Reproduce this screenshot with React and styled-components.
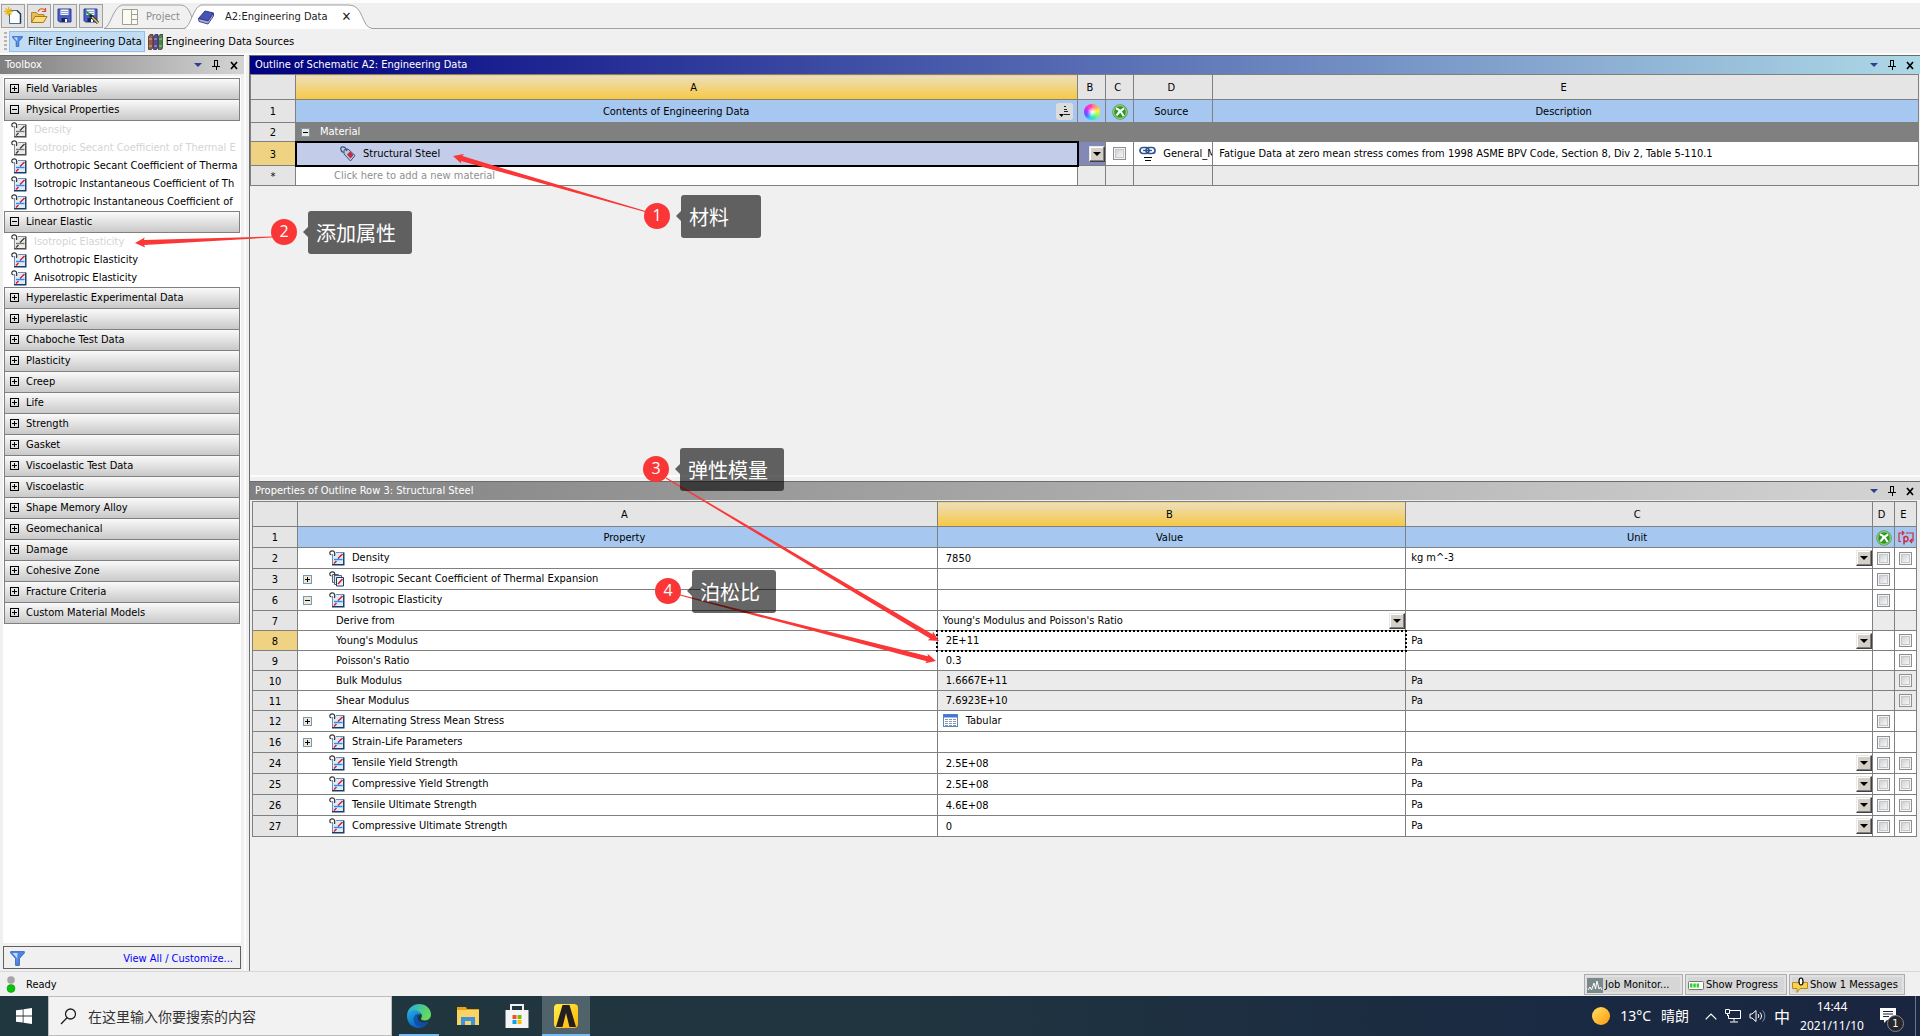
import React from 'react';
import styled, { createGlobalStyle, css } from 'styled-components';

const GlobalStyle = createGlobalStyle`
  *, *::before, *::after { box-sizing: border-box; }
  body { margin: 0; background: #f0f0f0; overflow: hidden; }
  body, button, input, select, table {
    font-family: 'DejaVu Sans Condensed', 'DejaVu Sans', 'Noto Sans CJK SC', sans-serif;
    font-size: 11px;
    line-height: 14px;
    color: #000;
  }
  button { margin: 0; padding: 0; border: 0; background: none; white-space: nowrap; }
  svg { display: block; flex: none; }
`;

/* ---------- layout ---------- */
const Page = styled.div`
  position: relative;
  display: flex;
  flex-direction: column;
  height: 100vh;
  overflow: hidden;
`;
const TabStrip = styled.header`
  display: flex;
  height: 29px;
  border-top: 3px solid #fdfdfd;
  background: #f0f0f0;
`;
const ToolGroup = styled.div`
  display: flex;
  gap: 2px;
  padding: 1px 0 1px 1px;
`;
const ToolButton = styled.button`
  display: grid;
  place-items: center;
  width: 24px;
  height: 24px;
  border: 1px solid #a0a0a0;
  background: #e3e3e3;
`;
const Tabs = styled.nav`
  display: flex;
  flex: 1;
  padding-left: 1px;
`;
const TabButton = styled.button`
  position: relative;
  display: flex;
  align-items: center;
  height: 26px;
  padding-top: 2px;
  gap: ${p => (p.$active ? 11 : 8)}px;
  width: ${p => (p.$active ? 188 : 80)}px;
  padding-left: ${p => (p.$active ? 14 : 18)}px;
  color: ${p => (p.$active ? '#222' : '#8c8c8c')};
  > svg { position: relative; }
  > span { position: relative; }
`;
const TabShape = styled.svg`
  && { position: absolute; left: 0; top: 0; overflow: visible; }
`;
const TabRest = styled.div`
  flex: 1;
  height: 26px;
  border-bottom: 1px solid #a0a0a0;
`;
const CloseMark = styled.span`
  margin-left: 3px;
  font-weight: bold;
  font-size: 13px;
`;
const FilterBar = styled.div`
  display: flex;
  align-items: center;
  height: 26px;
  padding: 1px 0 0 4px;
  border-bottom: 2px solid #fbfbfb;
`;
const Grip = styled.i`
  width: 3px;
  height: 19px;
  margin-right: 2px;
  background: repeating-linear-gradient(#b4b4b4 0 2px, transparent 2px 4px);
`;
const BarButton = styled.button`
  display: flex;
  align-items: center;
  gap: ${p => (p.$on ? 5 : 3)}px;
  height: 21px;
  padding: 0 2px;
  border: 1px solid ${p => (p.$on ? '#90c0f0' : 'transparent')};
  background: ${p => (p.$on ? '#c1dcf3' : 'transparent')};
`;
const Work = styled.div`
  display: flex;
  flex: 1;
  min-height: 0;
`;
const Sidebar = styled.aside`
  display: flex;
  flex-direction: column;
  width: 244px;
`;
const Splitter = styled.div`
  width: 6px;
  border-left: 2px solid #fcfcfc;
  border-right: 1px solid #707070;
`;
const Main = styled.main`
  display: flex;
  flex-direction: column;
  flex: 1;
  min-width: 0;
`;
const TitleBar = styled.div`
  display: flex;
  align-items: center;
  gap: 10px;
  height: 19px;
  padding: 0 6px 0 5px;
  border-top: 1px solid #6c6c6c;
  color: #fff;
  background: ${p => (p.$focused ? 'linear-gradient(90deg, #000080, #add8e6)' : 'linear-gradient(90deg, #808080, #d4d4d4)')};
  h2 { flex: 1; margin: 0; font: inherit; }
`;
const TitleButton = styled.button`
  display: grid;
  place-items: center;
  height: 14px;
`;

/* ---------- toolbox ---------- */
const TreeArea = styled.div`
  flex: 1;
  min-height: 0;
  margin: 2px 3px 3px 3px;
  padding: 2px 1px 0 1px;
  background: #fff;
  overflow: hidden;
`;
const Category = styled.button`
  display: flex;
  align-items: center;
  gap: 7px;
  width: 100%;
  height: 22px;
  margin-bottom: -1px;
  padding: 0 0 1px 5px;
  border: 1px solid #808080;
  background: linear-gradient(#fafafa, #c9c9c9);
  position: relative;
`;
const ItemList = styled.ul`
  margin: 0;
  padding: 1px 0 0 7px;
  list-style: none;
`;
const Item = styled.li`
  display: flex;
  align-items: center;
  gap: 7px;
  height: 18px;
  white-space: nowrap;
  color: ${p => (p.$off ? '#d4d4d4' : '#000')};
`;
const CustomizeBar = styled.div`
  display: flex;
  align-items: center;
  justify-content: space-between;
  height: 23px;
  margin: 0 3px 2px 3px;
  padding: 2px 7px 0 6px;
  border: 1px solid #606060;
  a { color: #0000ff; text-decoration: none; }
`;

/* ---------- grids ---------- */
const OutlinePane = styled.section`
  height: 422px;
  border-bottom: 2px solid #fcfcfc;
`;
const PropertiesPane = styled.section`
  flex: 1;
  min-height: 0;
  margin-top: 4px;
`;
const TableInset = styled.div`
  padding: ${p => (p.$wide ? '0 1px 0 0' : '1px 3px 0 2px')};
`;
const Grid = styled.table`
  width: 100%;
  table-layout: fixed;
  border-collapse: collapse;
  background: #fff;
`;
const Col = styled.col`
  width: ${p => p.$w || 'auto'};
`;
const Row = styled.tr`
  height: ${p => p.$h || 21}px;
`;
const cell = css`
  padding: 0;
  border: 1px solid #808080;
  font-weight: normal;
  white-space: nowrap;
  overflow: hidden;
`;
const Letter = styled.th`
  ${cell}
  padding: 2px ${p => (p.$main ? 0 : 4)}px 0 ${p => (p.$main ? 14 : 0)}px;
  background: ${p => (p.$hot ? 'linear-gradient(#ecdfbd, #f7c843)' : '#e5e5e5')};
`;
const Head = styled.th`
  ${cell}
  padding: 1px ${p => (p.$main || p.$icon ? 0 : 4)}px 0 ${p => (p.$main ? 14 : 0)}px;
  background: #a6c7f0;
`;
const HeadInner = styled.span`
  display: flex;
  align-items: center;
  justify-content: center;
`;
const HeadText = styled.span`
  flex: 1;
`;
const SortButton = styled.button`
  display: grid;
  place-items: center;
  width: 17px;
  height: 17px;
  margin-right: 4px;
  border-radius: 3px;
  background: #dcdcdc;
`;
const Num = styled.th`
  ${cell}
  padding-top: 2px;
  background: ${p => (p.$hot ? '#f0d283' : '#e5e5e5')};
`;
const Cell = styled.td`
  ${cell}
  padding-left: ${p => p.$pad || 0}px;
  background: ${p => p.$bg || '#fff'};
  color: ${p => p.$fg || '#000'};
  ${p => p.$selected && css`
    outline: 2px solid #000;
    outline-offset: -1px;
    position: relative;
  `}
  ${p => p.$marching && css`
    outline: 2px dotted #000;
    outline-offset: -1px;
    position: relative;
  `}
`;
const Label = styled.span`
  display: flex;
  align-items: center;
  gap: ${p => p.$gap || 7}px;
  padding-left: ${p => p.$indent || 0}px;
`;
const Slot = styled.span`
  display: flex;
  width: 19px;
`;
const Center = styled.span`
  display: flex;
  justify-content: ${p => (p.$end ? 'flex-end' : 'center')};
`;
const ValueBox = styled.input`
  display: block;
  width: 100%;
  height: 16px;
  padding: 0 0 0 8px;
  border: 0;
  background: transparent;
  outline: none;
`;
const PickWrap = styled.span`
  display: flex;
  align-items: center;
  position: relative;
`;
const Pick = styled.select`
  appearance: none;
  flex: 1;
  min-width: 0;
  height: 16px;
  padding: 0 18px 0 5px;
  border: 0;
  background: transparent;
  outline: none;
`;
const dropFace = css`
  display: grid;
  place-items: center;
  width: 16px;
  height: 16px;
  border: 1px solid;
  border-color: #e8e8e8 #404040 #404040 #e8e8e8;
  background: #d4d0c8;
  box-shadow: inset -1px -1px 0 #808080, inset 1px 1px 0 #fff;
`;
const DropFace = styled.i`
  ${dropFace}
  position: absolute;
  right: 0;
  pointer-events: none;
`;
const DropButton = styled.button`
  ${dropFace}
`;
const Tick = styled.input`
  appearance: none;
  display: block;
  width: 13px;
  height: 13px;
  margin: 0 auto;
  border: 1px solid #8f8f8f;
  background: linear-gradient(135deg, #c3c8ce, #f5f5f5 80%);
  box-shadow: inset 0 0 0 1px #f4f4f4, inset 0 0 0 2px #c4c8cc;
`;

/* ---------- status bar and taskbar ---------- */
const StatusBar = styled.footer`
  display: flex;
  align-items: center;
  height: 25px;
  padding: 1px 15px 0 6px;
  border-top: 1px solid #d7d7d7;
  background: #f0f0f0;
`;
const StatusText = styled.span`
  flex: 1;
  padding-left: 10px;
`;
const StatusButtons = styled.div`
  display: flex;
  gap: 2px;
`;
const StatusButton = styled.button`
  display: flex;
  align-items: center;
  gap: 2px;
  width: ${p => p.$w}px;
  height: 21px;
  padding: 1px 2px 0;
  border: 1px solid #adadad;
  background: #d6d6d6;
  box-shadow: inset 0 0 0 2px #e1e1e1;
`;
const Taskbar = styled.footer`
  display: flex;
  height: 40px;
  background: linear-gradient(90deg, #21373f, #20353f 45%, #1a2a42 80%, #1a2540);
  font-family: 'Noto Sans', 'Noto Sans CJK SC', sans-serif;
  color: #fff;
`;
const StartButton = styled.button`
  display: grid;
  place-items: center;
  width: 48px;
`;
const SearchBox = styled.label`
  display: flex;
  align-items: center;
  gap: 11px;
  width: 344px;
  margin-right: 3px;
  padding-left: 11px;
  border: 1px solid #bdbdbd;
  background: #f2f2f2;
  input {
    flex: 1;
    min-width: 0;
    border: 0;
    padding: 0;
    outline: none;
    background: transparent;
    font: 14px/20px 'Noto Sans CJK SC', sans-serif;
  }
  input::placeholder { color: #333; opacity: 1; }
`;
const Apps = styled.div`
  display: flex;
  flex: 1;
  gap: 1px;
`;
const AppButton = styled.button`
  display: grid;
  place-items: center;
  width: 48px;
  background: ${p => (p.$current ? '#50626a' : 'transparent')};
  box-shadow: ${p => (p.$current ? 'inset 0 -2px #76b9ed' : 'none')};
  ${p => p.$running && css`
    background: linear-gradient(#76b9ed, #76b9ed) center bottom / 40px 2px no-repeat;
  `}
`;
const Tray = styled.div`
  display: flex;
  align-items: center;
  gap: 8px;
  padding-right: 4px;
`;
const Weather = styled.button`
  display: flex;
  align-items: center;
  gap: 10px;
  margin-right: 8px;
  color: #fff;
  font: 14px/20px 'Noto Sans', 'Noto Sans CJK SC', sans-serif;
`;
const Lang = styled.span`
  font: 16px/20px 'Noto Sans CJK SC', sans-serif;
`;
const Clock = styled.time`
  width: 68px;
  font-size: 12px;
  line-height: 19px;
  text-align: center;
`;
const Notice = styled.button`
  display: flex;
  position: relative;
  width: 42px;
  height: 40px;
  align-items: center;
  padding-left: 6px;
  border-right: 1px solid #6c7686;
`;
const NoticeCount = styled.span`
  position: absolute;
  left: 13px;
  top: 19px;
  display: grid;
  place-items: center;
  width: 17px;
  height: 17px;
  border: 1px solid #888;
  border-radius: 50%;
  background: #26282c;
  color: #fff;
`;

/* ---------- annotations drawn over the window ---------- */
const Arrows = styled.svg`
  position: absolute;
  inset: 0;
  width: 100%;
  height: 100%;
  pointer-events: none;
`;
const Badge = styled.span`
  position: absolute;
  left: ${p => p.$x}px;
  top: ${p => p.$y}px;
  display: grid;
  place-items: center;
  width: 26px;
  height: 26px;
  padding-bottom: 2px;
  border-radius: 50%;
  background: #fa3636;
  color: #fff;
  font: 16px/20px 'Open Sans', 'Noto Sans', sans-serif;
`;
const Callout = styled.span`
  position: absolute;
  left: ${p => p.$x}px;
  top: ${p => p.$y}px;
  width: ${p => p.$w}px;
  height: 43px;
  padding: 7px 8px;
  border-radius: 3px;
  background: rgba(0, 0, 0, 0.6);
  color: #fff;
  font: 20px/30px 'Noto Sans CJK SC', sans-serif;
  white-space: nowrap;
  &::before {
    content: '';
    position: absolute;
    right: 100%;
    top: 16px;
    border: 5px solid transparent;
    border-left: 0;
    border-right-color: rgba(0, 0, 0, 0.6);
  }
`;

/* ---------- icons ---------- */
const PlusMinus = ({ open, soft }) => (
  <svg width="9" height="9" viewBox="0 0 9 9" shapeRendering="crispEdges">
    <rect x="0.5" y="0.5" width="8" height="8" fill={soft ? '#ece9d8' : 'none'} stroke={soft ? '#7898b5' : '#000'} />
    <path d={open ? 'M2 4.5h5' : 'M2 4.5h5M4.5 2v5'} stroke="#000" />
  </svg>
);
const PropIcon = ({ off }) => (
  <svg width="16" height="16" viewBox="0 0 16 16">
    <path d="M3.500 4V14.500H14.500V2.500H7" fill={off ? '#ececec' : '#dfeaf6'} stroke={off ? '#8a8a8a' : '#6f8cb0'} />
    <path d="M3 14.800H14.800V2.500" fill="none" stroke={off ? '#4d4d4d' : '#1d3c62'} strokeWidth="1.400" />
    <path d="M5 9.500h8.500" stroke={off ? '#777' : '#2090ff'} strokeWidth="1.400" />
    <path d="M5 13.500L7.500 11M9 8.500L13.500 4" fill="none" stroke={off ? '#444' : '#d82020'} strokeWidth="1.500" />
    <path d="M2.500 5C0 4.500 .2 1 3 .8S6 3 5.500 6" fill="none" stroke="#333" strokeWidth="1.200" />
  </svg>
);
const StackIcon = () => (
  <svg width="16" height="16" viewBox="0 0 16 16">
    <path d="M3.500 3.500h6v8h-6z" fill="#dfe6ee" stroke="#50647c" />
    <path d="M5.500 4.500h7v9h-7z" fill="#dfe6ee" stroke="#50647c" />
    <path d="M7.500 6.500h7v8.500h-7z" fill="#eef4fa" stroke="#1d3c62" />
    <path d="M9 13l4.500-5" stroke="#d01818" strokeWidth="1.500" />
    <path d="M2.500 5C0 4.500 .2 1 3 .8S6 2.500 5.500 4.500" fill="none" stroke="#333" strokeWidth="1.200" />
  </svg>
);
const TagIcon = () => (
  <svg width="16" height="16" viewBox="0 0 16 16">
    <path d="M4 4l4-1 7 6.500-4.500 5.500L4 8z" fill="#bcc8da" stroke="#35507a" />
    <path d="M7 8.500l3-3 3.500 3.500-3 3.500z" fill="#c02a4a" />
    <path d="M3.500 6.500C0 5 0 1 2.500 .8S6 2 7 5" fill="none" stroke="#35507a" strokeWidth="1.200" />
  </svg>
);
const LinkIcon = () => (
  <svg width="17" height="16" viewBox="0 0 17 16">
    <rect x="1" y="1.500" width="9" height="6" rx="3" fill="none" stroke="#2f5590" strokeWidth="1.700" />
    <rect x="7" y="1.500" width="9" height="6" rx="3" fill="none" stroke="#2f5590" strokeWidth="1.700" />
    <path d="M4 4.500h9" stroke="#2f5590" strokeWidth="1.300" />
    <path d="M5 11.500h8M6 14.500h6" stroke="#000" />
  </svg>
);
const TabularIcon = () => (
  <svg width="16" height="14" viewBox="0 0 16 14">
    <rect x="0.500" y="0.500" width="14" height="12" fill="#fff" stroke="#5f86c4" />
    <rect x="0.500" y="0.500" width="14" height="3" fill="#3f78d8" />
    <path d="M2 5.500h3m1 0h3m1 0h3M2 7.500h3m1 0h3m1 0h3M2 9.500h3m1 0h3m1 0h3M2 11.500h3m1 0h3m1 0h3" stroke="#8496b4" />
  </svg>
);
const ExcludeIcon = () => (
  <svg width="16" height="16" viewBox="0 0 16 16">
    <circle cx="8" cy="8" r="7.300" fill="#2a9a1c" stroke="#6ba06a" />
    <circle cx="8" cy="8" r="6.300" fill="none" stroke="#cfe8c8" strokeWidth=".8" />
    <path d="M4 4.500C7 5 9.500 8 11.500 12M12 4.500C9 6 6 9 4.500 11.500" fill="none" stroke="#fff" strokeWidth="2" />
  </svg>
);
const ParamIcon = () => (
  <svg width="16" height="16" viewBox="0 0 16 16" fill="none" stroke="#d02a3c" strokeWidth="1.200">
    <path d="M3 11.500H1V3h4M4 1l2 2-2 2M8 3h7v8h-3M14 9l-2 2 2 2" />
    <path d="M6 14.500V6.500M6 7.500c1-1.500 4-1.500 4 1.500s-3 3-4 1.500" strokeWidth="1.500" />
  </svg>
);
const Wheel = styled.i`
  display: block;
  width: 16px;
  height: 16px;
  border-radius: 50%;
  background: radial-gradient(#fff, transparent 45%), conic-gradient(#f6c, #fa4, #fe4, #8f5, #3ea, #3cf, #56f, #a3f, #f3c, #f48);
`;
const Funnel = ({ size = 11 }) => (
  <svg width={size} height={size} viewBox="0 0 12 12">
    <path d="M0.500 0.500h11v1L7.500 6v5.500H4.500V6L.5 1.500z" fill="#4f86e4" stroke="#2a5cb8" strokeWidth=".7" />
    <path d="M2 1.500h4L5.500 10V5.500z" fill="#c4dcfa" />
  </svg>
);
const DownTri = ({ color = '#000' }) => (
  <svg width="8" height="4" viewBox="0 0 8 4"><path d="M0 0h8L4 4z" fill={color} /></svg>
);
const PinIcon = () => (
  <svg width="8" height="10" viewBox="0 0 8 10" fill="none" stroke="#000" shapeRendering="crispEdges">
    <path d="M2.500 6V.5h3V6M0 6.500h8M4 7v3M5 1v5" />
  </svg>
);
const XIcon = () => (
  <svg width="8" height="9" viewBox="0 0 8 9"><path d="M1 1l6 7M7 1L1 8" stroke="#000" strokeWidth="1.700" /></svg>
);
const SortIcon = () => (
  <svg width="12" height="12" viewBox="0 0 12 12" stroke="#222" fill="none">
    <path d="M5 .5h2M5 3.500h3M5 5.500h4M5 8.500h6" />
    <path d="M0 8h5L2.500 11z" fill="#000" stroke="none" />
  </svg>
);
const NewIcon = () => (
  <svg width="18" height="18" viewBox="0 0 18 18">
    <path d="M5.500 3.500h8l3 3v10h-11z" fill="#fdfefe" stroke="#4d6d92" />
    <path d="M13 3.500l3.500 3.500v9.500" fill="none" stroke="#1c3a5c" strokeWidth="1.500" />
    <path d="M4.500 0v9M0 4.500h9M1.500 1.500l6 6M7.500 1.500l-6 6" stroke="#e5b91c" strokeWidth="1.300" />
  </svg>
);
const OpenIcon = () => (
  <svg width="18" height="18" viewBox="0 0 18 18">
    <path d="M1.500 15.500V5.500h5l1.500 2h6v3" fill="#e9bc5a" stroke="#b8862a" />
    <path d="M1.500 15.500L5 9.500h12l-3.500 6z" fill="#fbdc7a" stroke="#a8781c" />
    <path d="M8 4.500c2-4 6-3 7-1M15.500 1v3.500h-3.500" fill="none" stroke="#d8502a" strokeWidth="1.200" />
  </svg>
);
const SaveIcon = ({ pencil }) => (
  <svg width="18" height="18" viewBox="0 0 18 18">
    <path d="M2 2h13v13H3.500L2 13.500z" fill="#4a5fc4" stroke="#2c3c94" />
    <path d="M4.500 2.500h8v5.500h-8z" fill="#f3f6ff" />
    <path d="M5 4.500h7M5 6.500h7" stroke="#9ab" />
    <path d="M5.500 11h6v4h-6z" fill="#1b2455" /><path d="M9 12h2v3H9z" fill="#fff" />
    {pencil && <><path d="M4 4.500l5 4" stroke="#24a03a" strokeWidth="2" /><path d="M8 8l8 8" stroke="#222" strokeWidth="3" /><path d="M10 10l6 6" stroke="#f0c95a" strokeWidth="1.500" /></>}
  </svg>
);
const ProjectIcon = () => (
  <svg width="16" height="16" viewBox="0 0 16 16" fill="#fbfbf6" stroke="#a39f8e">
    <path d="M.5.5h15v15H.5zM9.500.5v15M9.500 5.500h6M9.500 10.500h6" />
  </svg>
);
const BookIcon = () => (
  <svg width="16" height="15" viewBox="0 0 16 15">
    <path d="M.5 8.500L7 1l8.500 2L10 11z" fill="#4754b4" stroke="#2e3686" />
    <path d="M.5 8.500L10 11l5.500-8v3L10 14 1 11.500z" fill="#a9b1dc" stroke="#2e3686" strokeWidth=".9" />
  </svg>
);
const BooksIcon = () => (
  <svg width="15" height="16" viewBox="0 0 15 16">
    {[['#9a5a48', 0], ['#5548a8', 5], ['#3f8a4c', 10]].map(([c, x]) => (
      <g key={c}>
        <path d={`M${x + 0.5} 2.500l1.500-2h3v13l-1.500 2h-3z`} fill={c} stroke="#3b3340" strokeWidth=".8" />
        <path d={`M${x + 1} 5h3M${x + 1} 12h3`} stroke="#e0c878" strokeWidth=".9" />
      </g>
    ))}
  </svg>
);
const LightIcon = () => (
  <svg width="10" height="17" viewBox="0 0 10 17">
    <circle cx="5" cy="4" r="3.800" fill="#a5a5a5" /><circle cx="5" cy="12.500" r="4" fill="#08c408" stroke="#0a8a0a" strokeWidth=".5" />
  </svg>
);
const MonitorIcon = () => (
  <svg width="16" height="15" viewBox="0 0 16 15"><path d="M0 0h16v15H0z" fill="#7a8a8a" /><path d="M1 12l2-3 1.500 3L7 5l1.500 6L10 3l2 8 1.500-2L15 12" fill="none" stroke="#fff" /></svg>
);
const ProgressIcon = () => (
  <svg width="16" height="9" viewBox="0 0 16 9"><rect x=".5" y=".5" width="15" height="8" rx="1" fill="#fff" stroke="#777" /><path d="M2 2.500h2.500v4H2zM5.300 2.500h2.500v4H5.300zM8.600 2.500H11v4H8.600z" fill="#2fd02f" /></svg>
);
const MessageIcon = () => (
  <svg width="16" height="16" viewBox="0 0 16 16"><path d="M.5 5.500h15v6H8l-3 4v-4H.5z" fill="#f7d24e" stroke="#b88a18" /><ellipse cx="9" cy="4.500" rx="2" ry="3.500" fill="#fff" stroke="#000" strokeWidth="1.200" /></svg>
);
const WindowsIcon = () => (
  <svg width="16" height="16" viewBox="0 0 16 16" fill="#fff"><path d="M0 2.300l6.700-.9v6.200H0zM7.500 1.300L16 0v7.600H7.500zM0 8.400h6.700v6.200L0 13.700zM7.500 8.400H16V16l-8.500-1.300z" /></svg>
);
const SearchIcon = () => (
  <svg width="17" height="17" viewBox="0 0 17 17" fill="none" stroke="#222" strokeWidth="1.300"><circle cx="10.500" cy="6" r="5" /><path d="M7 9.700L1 16" /></svg>
);
const EdgeIcon = () => (
  <svg width="24" height="24" viewBox="0 0 24 24">
    <defs>
      <linearGradient id="edgeTop" x1="0" y1="0" x2="1" y2="0.400"><stop offset="0" stopColor="#28a8e8" /><stop offset="1" stopColor="#62dc5c" /></linearGradient>
      <linearGradient id="edgeLow" x1="0" y1="0" x2="0.600" y2="1"><stop offset="0" stopColor="#1fb0ee" /><stop offset="1" stopColor="#0d56b4" /></linearGradient>
    </defs>
    <path d="M0 11C1 4 6 0 12 0c7 0 12 5 12 10.500 0 4-3 6-6.500 6s-4-1.500-3-3S15 9 11 8 2 7 0 11z" fill="url(#edgeTop)" />
    <path d="M0 12c0-3 3-6 7-6 4.500 0 6.500 2.500 6.500 4.500C11 10 9.500 12.500 10.500 15c1.500 4 7 5 11 2.500C20 21 16 24 12 24 5 24 0 19 0 12z" fill="url(#edgeLow)" />
    <path d="M8 11c-3 4-1 11 5.500 11.500 3 0 6-2 8-5-5 2.500-9.500 1-11-2.500C9.500 12.500 11 11 12 10.500 10.500 9.800 9 10 8 11z" fill="#0a4aa0" opacity=".75" />
  </svg>
);
const FolderIcon = () => (
  <svg width="22" height="19" viewBox="0 0 22 19"><path d="M0 0h9l1 2h12v16H0z" fill="#e8a317" /><path d="M0 3h22v15H0z" fill="#fbd363" /><path d="M4 18v-8h14v8h-4v-4H8v4z" fill="#3b93dc" /></svg>
);
const StoreIcon = () => (
  <svg width="24" height="24" viewBox="0 0 24 24"><path d="M6 7V1h12v6" fill="none" stroke="#eee" strokeWidth="2" /><path d="M.5 6h23v18H.5z" fill="#f5f5f5" /><path d="M7.500 11h4v4h-4z" fill="#f25022" /><path d="M12.500 11h4v4h-4z" fill="#7fba00" /><path d="M7.500 16h4v4h-4z" fill="#00a4ef" /><path d="M12.500 16h4v4h-4z" fill="#ffb900" /></svg>
);
const AnsysIcon = () => (
  <svg width="24" height="24" viewBox="0 0 24 24">
    <defs><linearGradient id="ansys" x1="0" y1="0" x2="1" y2="1"><stop offset="0" stopColor="#fff04a" /><stop offset="1" stopColor="#ffb400" /></linearGradient></defs>
    <rect width="24" height="24" rx="4" fill="url(#ansys)" />
    <path d="M8.500 1h7L22 23h-6.500L12 9 8.500 23H2z" fill="#231f20" />
  </svg>
);
const Sun = styled.i`
  width: 18px;
  height: 18px;
  border-radius: 50%;
  background: linear-gradient(135deg, #ffe066, #ff9a0a);
`;
const ChevronUp = () => (<svg width="12" height="7" viewBox="0 0 12 7"><path d="M.7 6.300L6 1l5.300 5.300" fill="none" stroke="#fff" strokeWidth="1.200" /></svg>);
const NetIcon = () => (<svg width="16" height="14" viewBox="0 0 16 14" fill="none" stroke="#fff"><path d="M5 1.500h10.500v8H3.500V6M9 9.500v3M5 13h8M.5.500h4v4h-4zM2.500 5v2" /></svg>);
const VolIcon = () => (<svg width="17" height="14" viewBox="0 0 17 14" fill="none" stroke="#fff"><path d="M1 5h2l4-3.500v11L3 9H1z" /><path d="M9 5c1 1 1 3 0 4M11 3.500c2 2 2 5 0 7" /><path d="M13.500 1.500c3 3 3 8 0 11" opacity=".5" /></svg>);
const NoteIcon = () => (<svg width="16" height="16" viewBox="0 0 16 16"><path d="M0 0h16v12H7l-3 3v-3H0z" fill="#fff" /><path d="M3 3.500h10M3 6h10M3 8.500h6" stroke="#1a2540" /></svg>);

/* ---------- data ---------- */
const toolbox = [
  { name: 'Field Variables' },
  {
    name: 'Physical Properties',
    items: [
      ['Density', true],
      ['Isotropic Secant Coefficient of Thermal E', true],
      ['Orthotropic Secant Coefficient of Therma'],
      ['Isotropic Instantaneous Coefficient of Th'],
      ['Orthotropic Instantaneous Coefficient of'],
    ],
  },
  { name: 'Linear Elastic', items: [['Isotropic Elasticity', true], ['Orthotropic Elasticity'], ['Anisotropic Elasticity']] },
  ...['Hyperelastic Experimental Data', 'Hyperelastic', 'Chaboche Test Data', 'Plasticity', 'Creep', 'Life', 'Strength', 'Gasket',
    'Viscoelastic Test Data', 'Viscoelastic', 'Shape Memory Alloy', 'Geomechanical', 'Damage', 'Cohesive Zone', 'Fracture Criteria',
    'Custom Material Models'].map(name => ({ name })),
];

const properties = [
  { n: 2, name: 'Density', value: '7850', unit: 'kg m^-3', d: 1, e: 1 },
  { n: 3, name: 'Isotropic Secant Coefficient of Thermal Expansion', fold: 'closed', stack: true, d: 1 },
  { n: 6, name: 'Isotropic Elasticity', fold: 'open', d: 1 },
  { n: 7, name: 'Derive from', child: true, choice: "Young's Modulus and Poisson's Ratio", flagsOff: true },
  { n: 8, name: "Young's Modulus", child: true, value: '2E+11', unit: 'Pa', e: 1, current: true },
  { n: 9, name: "Poisson's Ratio", child: true, value: '0.3', e: 1 },
  { n: 10, name: 'Bulk Modulus', child: true, value: '1.6667E+11', fixedUnit: 'Pa', e: 1, readOnly: true },
  { n: 11, name: 'Shear Modulus', child: true, value: '7.6923E+10', fixedUnit: 'Pa', e: 1, readOnly: true },
  { n: 12, name: 'Alternating Stress Mean Stress', fold: 'closed', tabular: true, d: 1 },
  { n: 16, name: 'Strain-Life Parameters', fold: 'closed', d: 1 },
  { n: 24, name: 'Tensile Yield Strength', value: '2.5E+08', unit: 'Pa', d: 1, e: 1 },
  { n: 25, name: 'Compressive Yield Strength', value: '2.5E+08', unit: 'Pa', d: 1, e: 1 },
  { n: 26, name: 'Tensile Ultimate Strength', value: '4.6E+08', unit: 'Pa', d: 1, e: 1 },
  { n: 27, name: 'Compressive Ultimate Strength', value: '0', unit: 'Pa', d: 1, e: 1 },
];

/* A dart that widens from its tail to the arrow head. */
const dart = (x1, y1, x2, y2) => {
  const len = Math.hypot(x2 - x1, y2 - y1);
  const ux = (x2 - x1) / len;
  const uy = (y2 - y1) / len;
  const at = (back, side) => `${x2 - ux * back - uy * side},${y2 - uy * back + ux * side}`;
  return [at(len, 0.5), at(9, 2.5), at(10, 5), at(0, 0), at(10, -5), at(9, -2.5), at(len, -0.5)].join(' ');
};

/* ---------- parts ---------- */
const Title = ({ text, focused }) => (
  <TitleBar $focused={focused}>
    <h2>{text}</h2>
    <TitleButton aria-label="Menu"><DownTri color="#2d3f8f" /></TitleButton>
    <TitleButton aria-label="Pin"><PinIcon /></TitleButton>
    <TitleButton aria-label="Close"><XIcon /></TitleButton>
  </TitleBar>
);

const Dropdown = ({ label, value }) => (
  <PickWrap>
    <Pick aria-label={label} defaultValue={value}><option>{value}</option></Pick>
    <DropFace><DownTri /></DropFace>
  </PickWrap>
);

const Toolbox = () => (
  <Sidebar>
    <Title text="Toolbox" />
    <TreeArea>
      {toolbox.map(group => (
        <React.Fragment key={group.name}>
          <Category aria-expanded={!!group.items}><PlusMinus open={!!group.items} />{group.name}</Category>
          {group.items && (
            <ItemList>
              {group.items.map(([name, off]) => <Item key={name} $off={off}><PropIcon off={off} />{name}</Item>)}
            </ItemList>
          )}
        </React.Fragment>
      ))}
    </TreeArea>
    <CustomizeBar><Funnel size={15} /><a href="#customize">View All / Customize...</a></CustomizeBar>
  </Sidebar>
);

const Outline = () => (
  <OutlinePane>
    <Title text="Outline of Schematic A2: Engineering Data" focused />
    <TableInset $wide>
      <Grid>
        <colgroup><Col $w="45px" /><Col $w="46.900%" /><Col $w="28px" /><Col $w="28px" /><Col $w="79px" /><Col /></colgroup>
        <thead>
          <Row $h={25}><Letter /><Letter $hot $main>A</Letter><Letter>B</Letter><Letter>C</Letter><Letter>D</Letter><Letter>E</Letter></Row>
          <Row $h={23}>
            <Num>1</Num>
            <Head $icon><HeadInner><HeadText>Contents of Engineering Data</HeadText><SortButton aria-label="Sort"><SortIcon /></SortButton></HeadInner></Head>
            <Head $icon><Center><Wheel /></Center></Head>
            <Head $icon><Center><ExcludeIcon /></Center></Head>
            <Head>Source</Head>
            <Head>Description</Head>
          </Row>
        </thead>
        <tbody>
          <Row $h={19}>
            <Num>2</Num>
            <Cell colSpan={5} $bg="#808080" $fg="#fff"><Label $indent={5} $gap={10}><PlusMinus open soft />Material</Label></Cell>
          </Row>
          <Row $h={24}>
            <Num $hot>3</Num>
            <Cell $bg="#c3cce8" $selected><Label $indent={44}><TagIcon />Structural Steel</Label></Cell>
            <Cell $bg="#8289b4"><Center $end><DropButton aria-label="Color"><DownTri /></DropButton></Center></Cell>
            <Cell><Tick type="checkbox" aria-label="Suppress" /></Cell>
            <Cell><Label $indent={5}><LinkIcon />General_M</Label></Cell>
            <Cell $pad={6}>Fatigue Data at zero mean stress comes from 1998 ASME BPV Code, Section 8, Div 2, Table 5-110.1</Cell>
          </Row>
          <Row $h={20}>
            <Num>*</Num>
            <Cell $fg="#909090" $pad={38}>Click here to add a new material</Cell>
            <Cell $bg="#ebebeb" /><Cell $bg="#ebebeb" /><Cell $bg="#ebebeb" /><Cell $bg="#ebebeb" />
          </Row>
        </tbody>
      </Grid>
    </TableInset>
  </OutlinePane>
);

const PropertyRow = ({ p }) => {
  const bg = p.readOnly ? '#ebebeb' : '#fff';
  const flagBg = p.readOnly || p.flagsOff ? '#ebebeb' : '#fff';
  return (
    <Row $h={p.child ? 20 : 21}>
      <Num $hot={p.current}>{p.n}</Num>
      <Cell>
        {p.child ? <Label $indent={38}>{p.name}</Label> : (
          <Label $indent={5}>
            <Slot>{p.fold && <PlusMinus soft open={p.fold === 'open'} />}</Slot>
            {p.stack ? <StackIcon /> : <PropIcon />}
            {p.name}
          </Label>
        )}
      </Cell>
      <Cell $bg={bg} $marching={p.current}>
        {p.choice && <Dropdown label={p.name} value={p.choice} />}
        {p.tabular && <Label $indent={5}><TabularIcon />Tabular</Label>}
        {p.value && <ValueBox aria-label={p.name} defaultValue={p.value} readOnly={p.readOnly} />}
      </Cell>
      <Cell $bg={bg} $pad={p.fixedUnit ? 5 : 0}>
        {p.unit ? <Dropdown label={`${p.name} unit`} value={p.unit} /> : p.fixedUnit}
      </Cell>
      <Cell $bg={flagBg}>{p.d && <Tick type="checkbox" aria-label={`Suppress ${p.name}`} />}</Cell>
      <Cell $bg={flagBg}>{p.e && <Tick type="checkbox" aria-label={`Parameterize ${p.name}`} />}</Cell>
    </Row>
  );
};

const Properties = () => (
  <PropertiesPane>
    <Title text="Properties of Outline Row 3: Structural Steel" />
    <TableInset>
      <Grid>
        <colgroup><Col $w="45px" /><Col $w="38.450%" /><Col $w="28.150%" /><Col /><Col $w="22px" /><Col $w="22px" /></colgroup>
        <thead>
          <Row $h={25}><Letter /><Letter $main>A</Letter><Letter $hot>B</Letter><Letter>C</Letter><Letter>D</Letter><Letter>E</Letter></Row>
          <Row>
            <Num>1</Num><Head $main>Property</Head><Head>Value</Head><Head>Unit</Head>
            <Head $icon><Center><ExcludeIcon /></Center></Head>
            <Head $icon><Center><ParamIcon /></Center></Head>
          </Row>
        </thead>
        <tbody>{properties.map(p => <PropertyRow key={p.n} p={p} />)}</tbody>
      </Grid>
    </TableInset>
  </PropertiesPane>
);

export default function App() {
  return (
    <>
      <GlobalStyle />
      <Page>
        <TabStrip>
          <ToolGroup>
            <ToolButton aria-label="New"><NewIcon /></ToolButton>
            <ToolButton aria-label="Open"><OpenIcon /></ToolButton>
            <ToolButton aria-label="Save"><SaveIcon /></ToolButton>
            <ToolButton aria-label="Save as"><SaveIcon pencil /></ToolButton>
          </ToolGroup>
          <Tabs>
            <TabButton>
              <TabShape width="92" height="26">
                <path d="M0 25.500C6 25 9 4 18 2h58c6 0 9 4 12 13" fill="#f1f1f1" stroke="#a0a0a0" />
                <path d="M0 25.500h82" stroke="#a0a0a0" />
              </TabShape>
              <ProjectIcon /><span>Project</span>
            </TabButton>
            <TabButton $active>
              <TabShape width="188" height="26">
                <path d="M0 26C7 24 9 4 17 2h148c15 0 12 22 23 23.500V26z" fill="#fff" />
                <path d="M0 25.500C7 24 9 4 17 2h148c15 0 12 22 23 23.500" fill="none" stroke="#a0a0a0" />
              </TabShape>
              <BookIcon /><span>A2:Engineering Data</span><CloseMark>✕</CloseMark>
            </TabButton>
            <TabRest />
          </Tabs>
        </TabStrip>
        <FilterBar>
          <Grip />
          <BarButton $on><Funnel /><span>Filter Engineering Data</span></BarButton>
          <BarButton><BooksIcon /><span>Engineering Data Sources</span></BarButton>
        </FilterBar>
        <Work>
          <Toolbox />
          <Splitter />
          <Main><Outline /><Properties /></Main>
        </Work>
        <StatusBar>
          <LightIcon />
          <StatusText>Ready</StatusText>
          <StatusButtons>
            <StatusButton $w={99}><MonitorIcon />Job Monitor...</StatusButton>
            <StatusButton $w={102}><ProgressIcon />Show Progress</StatusButton>
            <StatusButton $w={116}><MessageIcon />Show 1 Messages</StatusButton>
          </StatusButtons>
        </StatusBar>
        <Taskbar>
          <StartButton aria-label="Start"><WindowsIcon /></StartButton>
          <SearchBox><SearchIcon /><input aria-label="Search" placeholder="在这里输入你要搜索的内容" /></SearchBox>
          <Apps>
            <AppButton $running aria-label="Edge"><EdgeIcon /></AppButton>
            <AppButton aria-label="Files"><FolderIcon /></AppButton>
            <AppButton aria-label="Store"><StoreIcon /></AppButton>
            <AppButton $current aria-label="Ansys"><AnsysIcon /></AppButton>
          </Apps>
          <Tray>
            <Weather><Sun /><span>13°C</span><span>晴朗</span></Weather>
            <ChevronUp />
            <NetIcon />
            <VolIcon />
            <Lang>中</Lang>
            <Clock>14:44<br />2021/11/10</Clock>
            <Notice aria-label="Notifications"><NoteIcon /><NoticeCount>1</NoticeCount></Notice>
          </Tray>
        </Taskbar>
        <Arrows fill="#fa3636">
          <polygon points={dart(647, 212, 453, 156)} />
          <polygon points={dart(272, 237, 135, 243)} />
          <polygon points={dart(666, 478, 939, 641)} />
          <polygon points={dart(680, 595, 936, 661)} />
        </Arrows>
        <Badge $x={644} $y={203}>1</Badge><Callout $x={681} $y={195} $w={80}>材料</Callout>
        <Badge $x={271} $y={219}>2</Badge><Callout $x={308} $y={211} $w={104}>添加属性</Callout>
        <Badge $x={643} $y={456}>3</Badge><Callout $x={680} $y={448} $w={104}>弹性模量</Callout>
        <Badge $x={655} $y={578}>4</Badge><Callout $x={692} $y={570} $w={84}>泊松比</Callout>
      </Page>
    </>
  );
}
